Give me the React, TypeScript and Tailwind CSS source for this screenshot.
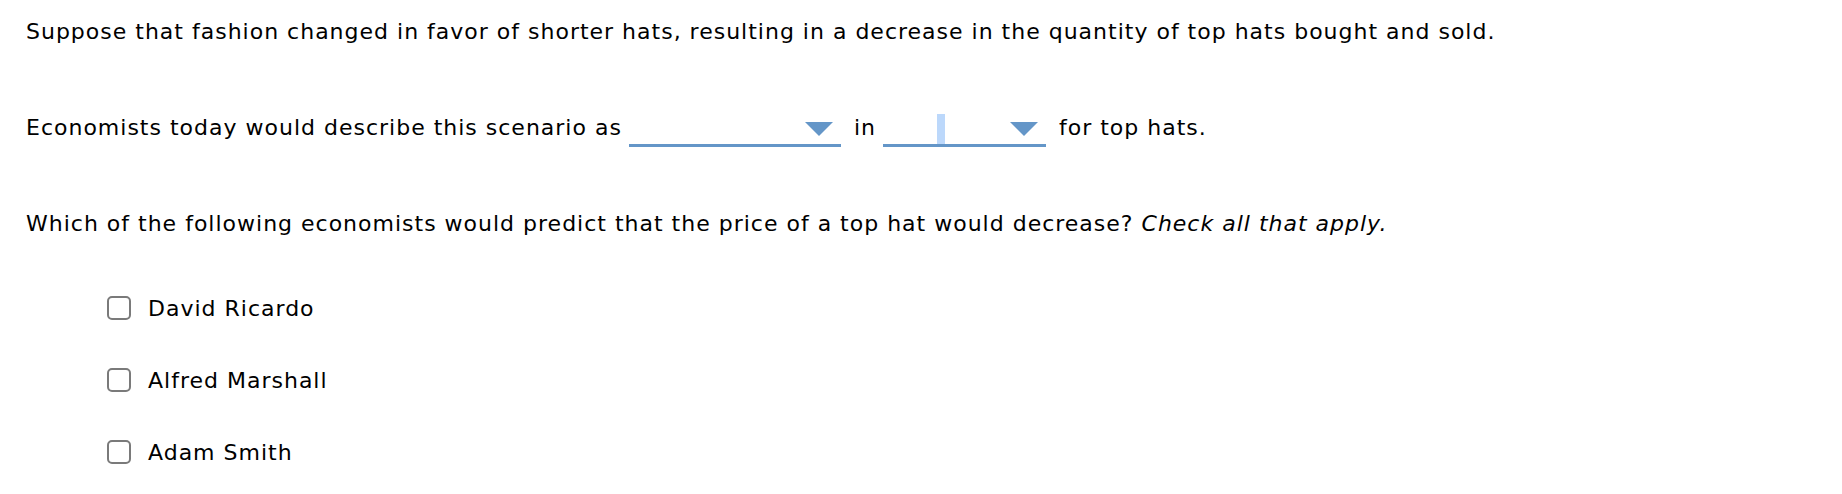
import { useState } from 'react';

function Dropdown({ width, caret }: { width: number; caret?: boolean }) {
  return (
    <span
      className="relative inline-flex items-start justify-end h-[30px] border-b-[3px] border-[#6496c8] ml-[7px] mr-[13px] mt-[7px]"
      style={{ width }}
    >
      {caret && <span className="absolute left-[54px] top-[-3px] w-[8px] h-[30px] bg-[#bcd8fb]" />}
      <svg width="28" height="14" viewBox="0 0 28 14" className="mt-[5px] mr-[8px]">
        <polygon points="0,0 28,0 14,14" fill="#6496c8" />
      </svg>
    </span>
  );
}

const options = ['David Ricardo', 'Alfred Marshall', 'Adam Smith'];

export default function App() {
  const [checked, setChecked] = useState<boolean[]>([false, false, false]);

  return (
    <div
      className="w-[1842px] h-[494px] bg-white text-black text-[22px] tracking-[1px] pl-[26px] pt-[18px]"
      style={{ fontFamily: '"DejaVu Sans", Verdana, sans-serif' }}
    >
      <p className="leading-[28px]">
        Suppose that fashion changed in favor of shorter hats, resulting in a decrease in the quantity of top hats bought and sold.
      </p>

      <p className="mt-[62px] leading-[40px] flex items-center">
        <span>Economists today would describe this scenario as</span>
        <Dropdown width={212} />
        <span>in</span>
        <Dropdown width={163} caret />
        <span>for top hats.</span>
      </p>

      <p className="mt-[62px] leading-[28px]">
        Which of the following economists would predict that the price of a top hat would decrease? <em>Check all that apply.</em>
      </p>

      <div className="mt-[56px] pl-[81px] flex flex-col gap-[44px]">
        {options.map((o, i) => (
          <label key={o} className="flex items-center gap-[17px] h-[28px]">
            <button
              onClick={() => setChecked(c => c.map((v, j) => (j === i ? !v : v)))}
              className={`w-[24px] h-[24px] rounded-[5px] border-2 border-[#7a7a7a] ${checked[i] ? 'bg-[#6496c8]' : 'bg-white'}`}
            />
            <span>{o}</span>
          </label>
        ))}
      </div>
    </div>
  );
}
